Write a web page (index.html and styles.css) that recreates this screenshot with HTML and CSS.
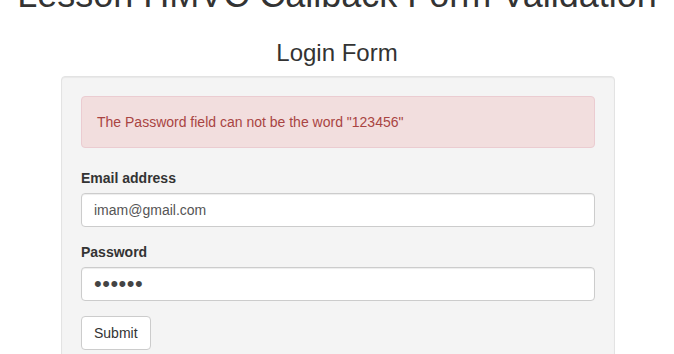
FILE: index.html
```html
<!DOCTYPE html>
<html>
<head>
<meta charset="utf-8">
<link rel="stylesheet" href="styles.css">
</head>
<body>
<div class="page">
  <h1 class="title">Lesson HMVC Callback Form Validation</h1>
  <h3 class="subtitle">Login Form</h3>
  <div class="well">
    <div class="alert">The Password field can not be the word "123456"</div>
    <form class="form">
      <div class="form-group">
        <label class="label" for="email">Email address</label>
        <input class="control" id="email" type="text" value="imam@gmail.com">
      </div>
      <div class="form-group">
        <label class="label" for="password">Password</label>
        <input class="control secret" id="password" type="password" value="123456">
      </div>
      <button class="btn" type="button">Submit</button>
    </form>
  </div>
</div>
</body>
</html>
```

FILE: styles.css
```css
html, body {
  margin: 0;
  padding: 0;
  background: #fff;
}
body {
  font-family: "Liberation Sans", Arial, sans-serif;
  font-size: 14px;
  line-height: 20px;
  color: #333;
  overflow: hidden;
}
.page {
  width: 674px;
}
.title {
  font-size: 36px;
  font-weight: 500;
  line-height: 39.6px;
  margin: -25px 0 25px;
  text-align: center;
  white-space: nowrap;
}
.subtitle {
  font-size: 24px;
  font-weight: 500;
  line-height: 26.4px;
  margin: 0 0 10px;
  text-align: center;
}
.well {
  box-sizing: border-box;
  width: 554px;
  margin-left: 61px;
  padding: 19px 19px 40px;
  background: #f4f4f4;
  border: 1px solid #e3e3e3;
  border-radius: 4px;
  box-shadow: inset 0 1px 1px rgba(0,0,0,0.05);
}
.alert {
  padding: 15px;
  margin-bottom: 20px;
  background: #f2dede;
  border: 1px solid #ebccd1;
  border-radius: 4px;
  color: #a94442;
}
.form-group {
  display: flex;
  flex-direction: column;
  margin-bottom: 15px;
}
.label {
  font-weight: 700;
  margin-bottom: 5px;
}
.control {
  box-sizing: border-box;
  height: 34px;
  width: 100%;
  padding: 6px 12px;
  font-family: "Liberation Sans", Arial, sans-serif;
  font-size: 14px;
  line-height: 20px;
  color: #555;
  background: #fff;
  border: 1px solid #ccc;
  border-radius: 4px;
  box-shadow: inset 0 1px 1px rgba(0,0,0,0.075);
  outline: none;
}
.secret {
  font-size: 22px;
  letter-spacing: 0.5px;
  padding: 0 12px;
  color: #444;
}
.btn {
  box-sizing: border-box;
  height: 34px;
  padding: 6px 12px;
  font-family: "Liberation Sans", Arial, sans-serif;
  font-size: 14px;
  line-height: 20px;
  color: #333;
  background: #fff;
  border: 1px solid #ccc;
  border-radius: 4px;
}
```
